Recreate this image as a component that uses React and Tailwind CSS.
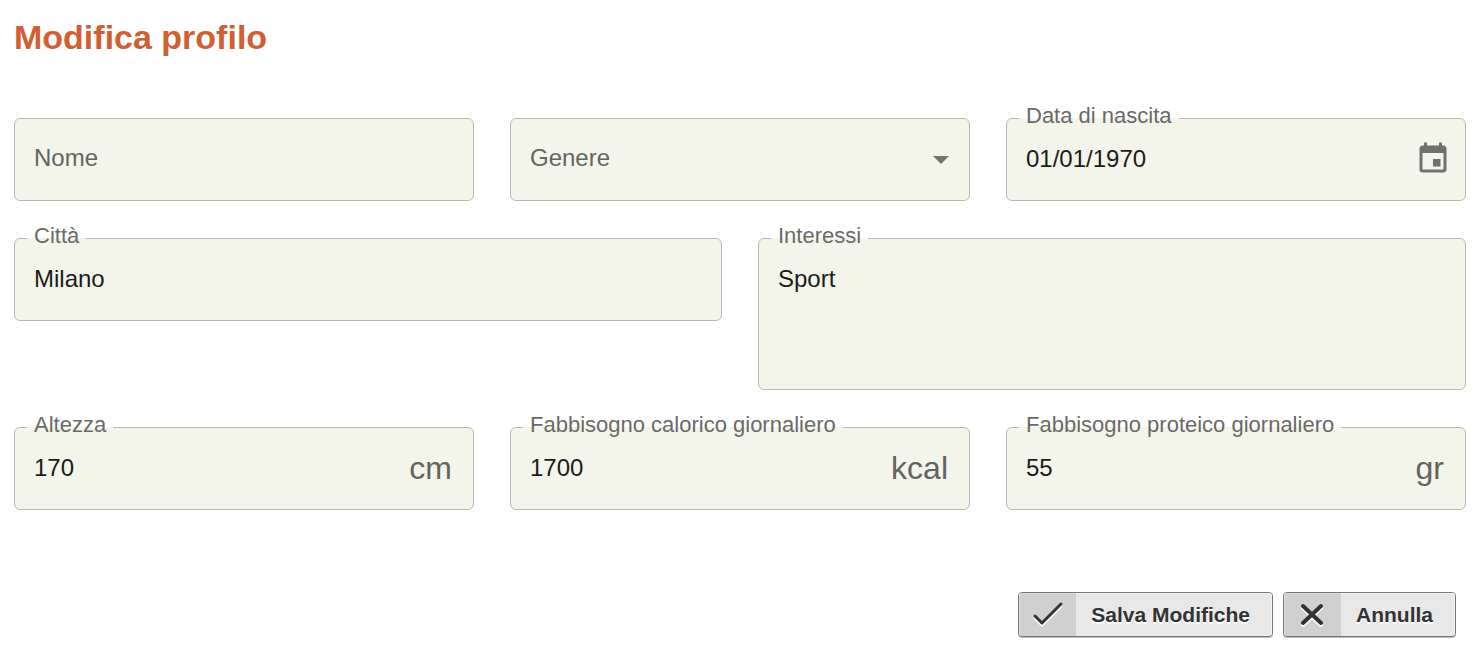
import React, { useState } from "react";
import { MdEvent } from "react-icons/md";

// Outlined box whose label sits in a notch of the top border
const Field = ({ id, label, suffix, children }) => (
  <fieldset className="min-w-0 rounded-md border border-[#b9bbb0] bg-[#f3f4ea] px-3">
    <legend className="px-[7px] pb-1 text-[22px] leading-[26px] text-[#6a6a68]">
      <label htmlFor={id}>{label}</label>
    </legend>
    <div className="flex items-center px-[7px] pb-[15px]">
      {children}
      {suffix && (
        <span className="pr-0.5 text-[32px] leading-[52px] text-[#63645f]">
          {suffix}
        </span>
      )}
    </div>
  </fieldset>
);

// Same box without a notch: the label shares the control's cell until it has a value
const EmptyField = ({ id, label, filled, icon, children }) => (
  <div className="min-w-0 pt-[15px]">
    <div className="flex h-[83px] items-center rounded-md border border-[#b9bbb0] bg-[#f3f4ea] px-[19px]">
      <div className="grid min-w-0 flex-1 items-center">
        <label
          htmlFor={id}
          className={
            filled
              ? "invisible col-start-1 row-start-1 text-2xl"
              : "pointer-events-none col-start-1 row-start-1 pb-1 text-2xl text-[#646560]"
          }
        >
          {label}
        </label>
        {children}
      </div>
      {icon}
    </div>
  </div>
);

const inputClass =
  "col-start-1 row-start-1 h-[52px] w-full min-w-0 flex-1 appearance-none bg-transparent text-2xl text-[#1c1c18] outline-none";

const ActionButton = ({ icon, children, ...props }) => (
  <button
    className="flex h-[45px] cursor-pointer overflow-hidden rounded-[4px] border border-[#777777] bg-[#e8e8e8] text-[21px] font-bold text-[#333333] shadow-[0_1px_0_#bbbbbb] [text-shadow:0_2px_0_#ffffff]"
    {...props}
  >
    <span className="flex h-full w-[57px] items-center justify-center bg-[#d0d0d0] shadow-[inset_1px_1px_0_#dddddd]">
      {icon}
    </span>
    <span className="flex h-full items-center pr-[22px] pl-[15px] shadow-[inset_-1px_1px_0_#f4f4f4]">
      {children}
    </span>
  </button>
);

const CheckIcon = () => (
  <svg width="32" height="28" viewBox="0 0 32 28" fill="none" strokeLinecap="round" strokeLinejoin="round">
    <path d="M3 17 L10 24 L29 5" stroke="#ffffff" strokeWidth="3" />
    <path d="M3 15 L10 22 L29 3" stroke="#333333" strokeWidth="3" />
  </svg>
);

const CloseIcon = () => (
  <svg width="24" height="26" viewBox="0 0 24 26" fill="none" strokeLinecap="round">
    <path d="M2 6 L20 23 M20 6 L2 23" stroke="#ffffff" strokeWidth="4" />
    <path d="M2 4 L20 21 M20 4 L2 21" stroke="#333333" strokeWidth="4" />
  </svg>
);

const ArrowIcon = () => (
  <svg className="pointer-events-none mr-px" width="16" height="8" viewBox="0 0 16 8" fill="#73746b">
    <path d="M0 0h16l-8 8z" />
  </svg>
);

const App = () => {
  const [form, setForm] = useState({
    nome: "",
    genere: "",
    nascita: "01/01/1970",
    citta: "Milano",
    interessi: "Sport",
    altezza: "170",
    calorie: "1700",
    proteine: "55",
  });

  const bind = (name) => ({
    id: name,
    name,
    value: form[name],
    onChange: (e) => setForm({ ...form, [name]: e.target.value }),
  });

  return (
    <main className="bg-white px-[14px] pt-4 pb-[17px] font-['Liberation_Sans',Arial,sans-serif]">
      <h1 className="text-[34px] leading-[42px] font-bold text-[#d06033]">
        Modifica profilo
      </h1>

      <form className="mt-[45px]" onSubmit={(e) => e.preventDefault()}>
        <div className="flex flex-col gap-[22px]">
          <div className="grid grid-cols-3 gap-9">
            <EmptyField id="nome" label="Nome" filled={form.nome !== ""}>
              <input className={inputClass} type="text" {...bind("nome")} />
            </EmptyField>

            <EmptyField
              id="genere"
              label="Genere"
              filled={form.genere !== ""}
              icon={<ArrowIcon />}
            >
              <select className={inputClass} {...bind("genere")}>
                <option value=""></option>
                <option value="f">Femmina</option>
                <option value="m">Maschio</option>
              </select>
            </EmptyField>

            <Field id="nascita" label="Data di nascita">
              <input className={inputClass} type="text" {...bind("nascita")} />
              <button type="button" aria-label="Apri calendario" className="-mr-[5px] cursor-pointer">
                <MdEvent className="size-9 text-[#70716a]" />
              </button>
            </Field>
          </div>

          <div className="grid grid-cols-2 items-start gap-9">
            <Field id="citta" label="Città">
              <input className={inputClass} type="text" {...bind("citta")} />
            </Field>
            <Field id="interessi" label="Interessi">
              <textarea
                className="h-[121px] min-w-0 flex-1 resize-none bg-transparent pt-[10px] text-2xl text-[#1c1c18] outline-none"
                {...bind("interessi")}
              />
            </Field>
          </div>

          <div className="grid grid-cols-3 gap-9">
            <Field id="altezza" label="Altezza" suffix="cm">
              <input className={inputClass} type="text" {...bind("altezza")} />
            </Field>
            <Field id="calorie" label="Fabbisogno calorico giornaliero" suffix="kcal">
              <input className={inputClass} type="text" {...bind("calorie")} />
            </Field>
            <Field id="proteine" label="Fabbisogno proteico giornaliero" suffix="gr">
              <input className={inputClass} type="text" {...bind("proteine")} />
            </Field>
          </div>
        </div>

        <div className="mt-[82px] flex justify-end gap-[10px] pr-[10px]">
          <ActionButton type="submit" icon={<CheckIcon />}>
            Salva Modifiche
          </ActionButton>
          <ActionButton type="button" icon={<CloseIcon />}>
            Annulla
          </ActionButton>
        </div>
      </form>
    </main>
  );
};

export default App;
